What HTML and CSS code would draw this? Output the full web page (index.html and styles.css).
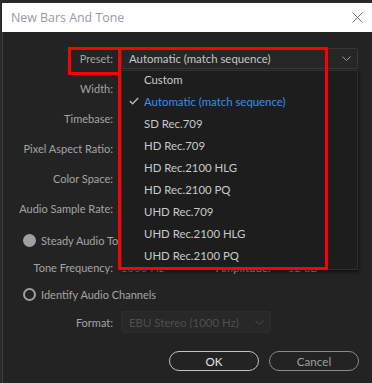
FILE: index.html
```html
<!DOCTYPE html>
<html lang="en">
<head>
  <meta charset="UTF-8" />
  <title>New Bars And Tone</title>
  <meta name="viewport" content="width=device-width, initial-scale=1" />
  <link rel="stylesheet" href="styles.css">
</head>
<body>
  <div class="page">
    <div class="window">
      <div class="titlebar">
        <span class="title">New Bars And Tone</span>
        <svg class="close" width="11" height="11" viewBox="0 0 11 11">
          <path d="M0.5 0.5 L10.5 10.5 M10.5 0.5 L0.5 10.5" stroke="#7a7a7a" stroke-width="1" fill="none" />
        </svg>
      </div>

      <div class="content">
        <div class="form">
          <div class="label">Preset:</div>
          <div class="field">
            <div class="select">
              <span>Automatic (match sequence)</span>
              <svg class="chevron" width="9" height="5" viewBox="0 0 9 5">
                <path d="M0.5 0.5 L4.5 4.5 L8.5 0.5" stroke="#9a9a9a" stroke-width="1" fill="none" />
              </svg>
            </div>
          </div>

          <div class="label">Width:</div>
          <div class="field"></div>
          <div class="label">Timebase:</div>
          <div class="field"></div>
          <div class="label">Pixel Aspect Ratio:</div>
          <div class="field"></div>
          <div class="label">Color Space:</div>
          <div class="field"></div>
          <div class="label">Audio Sample Rate:</div>
          <div class="field"></div>

          <div class="radio-row">
            <span class="radio filled"></span>
            <span>Steady Audio Tone</span>
          </div>

          <div class="label">Tone Frequency:</div>
          <div class="field">
            <span class="value">1000</span>&nbsp;<span class="unit">Hz</span>
            <span class="amp-label">Amplitude:</span>
            <span class="value">-12</span>&nbsp;<span class="unit">dB</span>
          </div>

          <div class="radio-row">
            <span class="radio"></span>
            <span>Identify Audio Channels</span>
          </div>

          <div class="label">Format:</div>
          <div class="field">
            <div class="select disabled">
              <span>EBU Stereo (1000 Hz)</span>
              <svg class="chevron" width="9" height="5" viewBox="0 0 9 5">
                <path d="M0.5 0.5 L4.5 4.5 L8.5 0.5" stroke="#4a4a4a" stroke-width="1" fill="none" />
              </svg>
            </div>
          </div>
        </div>

        <div class="buttons">
          <button class="btn primary">OK</button>
          <button class="btn">Cancel</button>
        </div>
      </div>
    </div>

    <!-- open preset menu -->
    <ul class="menu">
      <li>Custom</li>
      <li class="selected">
        <svg class="check" width="10" height="8" viewBox="0 0 10 8">
          <path d="M0.8 4 L3.6 6.8 L9.2 1" stroke="#b4b4b4" stroke-width="1.5" fill="none" />
        </svg>
        Automatic (match sequence)
      </li>
      <li>SD Rec.709</li>
      <li>HD Rec.709</li>
      <li>HD Rec.2100 HLG</li>
      <li>HD Rec.2100 PQ</li>
      <li>UHD Rec.709</li>
      <li>UHD Rec.2100 HLG</li>
      <li>UHD Rec.2100 PQ</li>
    </ul>

    <!-- annotation boxes -->
    <div class="mark mark-label"></div>
    <div class="mark mark-menu"></div>
  </div>
</body>
</html>
```

FILE: styles.css
```css
body {
  margin: 0;
  background: #2a2a2a;
  font-family: Lato, 'Noto Sans', sans-serif;
  font-size: 11.4px;
  color: #a3a3a3;
  overflow: hidden;
}
.page {
  position: relative;
  width: 372px;
  height: 383px;
}
.window {
  margin: 3px 0 0 2px;
  height: 380px;
  background: #232323;
}
.titlebar {
  height: 29px;
  background: #ffffff;
  display: flex;
  align-items: center;
  justify-content: space-between;
  padding: 0 9px 0 9px;
}
.title {
  font-family: 'Open Sans', sans-serif;
  font-size: 12.4px;
  color: #9a98a4;
}
.content {
  border-left: 1px solid #3c3c3c;
  height: 351px;
  padding-top: 11px;
  box-sizing: border-box;
}
.form {
  display: grid;
  grid-template-columns: 110px 1fr;
  grid-template-rows: repeat(6, 30px) 34px 20px 35px 20px;
  column-gap: 8px;
}
.label {
  display: flex;
  align-items: center;
  justify-content: flex-end;
  white-space: nowrap;
  font-size: 11px;
}
.field {
  display: flex;
  align-items: center;
  padding-right: 14px;
  white-space: nowrap;
}
.select {
  flex: 1;
  height: 19px;
  border: 1px solid #383838;
  border-radius: 2px;
  background: #262626;
  display: flex;
  align-items: center;
  justify-content: space-between;
  padding: 0 6px 0 7px;
  color: #c6c6c6;
}
.select.disabled {
  flex: 0 0 auto;
  width: 135px;
  height: 20px;
  background: #282828;
  border-color: #2c2c2c;
  color: #4f4f4f;
}
.radio-row {
  grid-column: 1 / 3;
  display: flex;
  align-items: center;
  gap: 5px;
  padding-left: 20px;
  font-size: 11px;
}
.radio {
  width: 9px;
  height: 9px;
  border: 2px solid #a0a0a0;
  border-radius: 50%;
}
.radio.filled {
  background: #a0a0a0;
}
.value {
  color: #3a8ee6;
}
.unit {
  color: #8c8c8c;
}
.amp-label {
  margin: 0 13px 0 52px;
}
.buttons {
  display: flex;
  justify-content: flex-end;
  gap: 10px;
  margin-top: 19px;
  padding-right: 13px;
}
.btn {
  width: 90px;
  height: 20px;
  border-radius: 10px;
  border: 1.5px solid #8a8a8a;
  background: transparent;
  font-family: Lato, 'Noto Sans', sans-serif;
  font-size: 11.6px;
  color: #a0a0a0;
  padding: 0;
}
.btn.primary {
  border-color: #c4c4c4;
  color: #e6e6e6;
}
.menu {
  position: absolute;
  left: 121px;
  top: 67px;
  width: 237px;
  margin: 0;
  padding: 0;
  list-style: none;
  background: #1d1d1d;
  border: 1px solid #2e2e2e;
  box-sizing: border-box;
  height: 200px;
  box-shadow: 1px 2px 3px rgba(0, 0, 0, 0.5);
  color: #c9c9c9;
}
.menu li {
  height: 22px;
  box-sizing: border-box;
  padding: 0 0 6px 22px;
  display: flex;
  align-items: center;
  position: relative;
}
.menu li.selected {
  color: #378ef0;
}
.check {
  position: absolute;
  left: 7px;
  top: 4px;
}
.mark {
  position: absolute;
  border: 3px solid #ff0000;
  box-sizing: border-box;
}
.mark-label {
  left: 68px;
  top: 44px;
  width: 53px;
  height: 28px;
}
.mark-menu {
  left: 118px;
  top: 44px;
  width: 210px;
  height: 223px;
}
```
